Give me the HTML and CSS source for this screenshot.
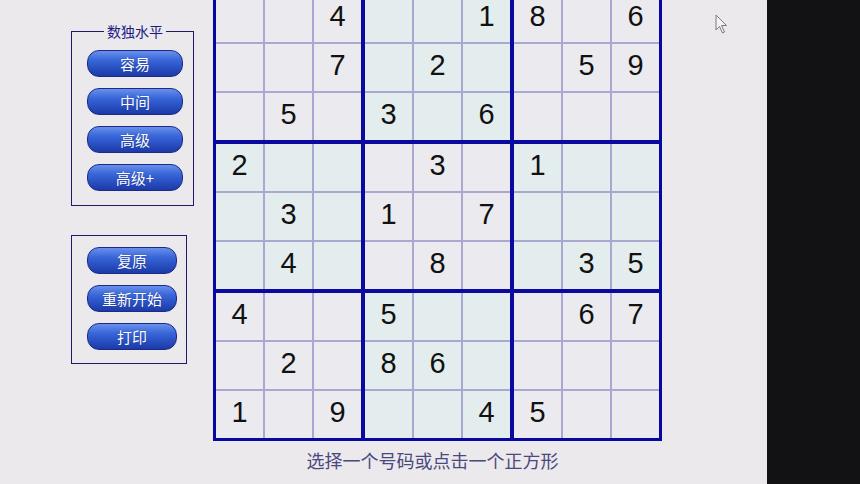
FILE: index.html
```html
<!DOCTYPE html>
<html lang="zh">
<head>
  <meta charset="UTF-8">
  <title>数独</title>
  <link rel="stylesheet" href="styles.css">
</head>
<body>
  <div class="screen">
    <div class="page">
      <div class="layout">
        <div class="side">
          <fieldset class="panel level">
            <legend>数独水平</legend>
            <button type="button" class="btn">容易</button>
            <button type="button" class="btn">中间</button>
            <button type="button" class="btn">高级</button>
            <button type="button" class="btn">高级+</button>
          </fieldset>
          <fieldset class="panel actions">
            <button type="button" class="btn">复原</button>
            <button type="button" class="btn">重新开始</button>
            <button type="button" class="btn">打印</button>
          </fieldset>
        </div>
        <div class="board-wrap">
          <div class="board" id="board"></div>
          <p class="hint">选择一个号码或点击一个正方形</p>
          <div class="numbers">
            <span>1</span><span>2</span><span>3</span><span>4</span><span>5</span><span>6</span><span>7</span><span>8</span><span>9</span>
          </div>
        </div>
      </div>
      <svg class="cursor" width="14" height="20" viewBox="0 0 14 20">
        <path d="M1 1 L1 16 L4.5 12.5 L7.5 19 L9.5 18 L6.5 11.5 L11.5 11.5 Z" fill="#f2f2f2" stroke="#7a7a7a" stroke-width="1"/>
      </svg>
    </div>
    <div class="dark"></div>
  </div>
  <script>
    const puzzle = [
      "004001806",
      "007020059",
      "050306000",
      "200030100",
      "030107000",
      "040080035",
      "400500067",
      "020860000",
      "109004500"
    ];
    const board = document.getElementById('board');
    for (let b = 0; b < 9; b++) {
      const block = document.createElement('div');
      block.className = 'block' + (b % 2 === 1 ? ' alt' : '');
      const br = Math.floor(b / 3) * 3;
      const bc = (b % 3) * 3;
      for (let i = 0; i < 9; i++) {
        const r = br + Math.floor(i / 3);
        const c = bc + (i % 3);
        const cell = document.createElement('div');
        cell.className = 'cell';
        const v = puzzle[r][c];
        if (v !== '0') cell.textContent = v;
        block.appendChild(cell);
      }
      board.appendChild(block);
    }
  </script>
</body>
</html>
```

FILE: styles.css
```css
body {
  margin: 0;
  background: #121113;
  font-family: "Liberation Sans", Arial, sans-serif;
}
.screen {
  display: flex;
  width: 860px;
  height: 484px;
  overflow: hidden;
}
.page {
  position: relative;
  width: 767px;
  height: 484px;
  background: #ebe9eb;
  overflow: hidden;
}
.dark {
  flex: 1;
  background: #121113;
}
.layout {
  display: flex;
  margin-top: -8px;
  padding-left: 71px;
}
.side {
  width: 142px;
  display: flex;
  flex-direction: column;
  align-items: flex-start;
}
.panel {
  box-sizing: border-box;
  margin: 0;
  border: 1px solid #1e1a66;
  display: flex;
  flex-direction: column;
  gap: 11px;
  font-family: "Noto Sans CJK SC", sans-serif;
}
.panel legend {
  margin: 0 auto;
  padding: 0 3px;
  font-size: 14px;
  line-height: 16px;
  color: #1a1a86;
}
.level {
  margin-top: 31px;
  width: 123px;
  padding: 11px 10px 14px 15px;
}
.level .btn {
  width: 96px;
}
.actions {
  margin-top: 29px;
  width: 115px;
  padding: 11px 9px 13px 15px;
}
.actions .btn {
  width: 90px;
}
.btn {
  height: 27px;
  padding: 0;
  border: 1px solid #1b2a86;
  border-radius: 12px;
  background: linear-gradient(to bottom, #6a90ec 0%, #3a68d8 35%, #2a52c4 65%, #1c3aa6 100%);
  color: #fff;
  font-family: "Noto Sans CJK SC", sans-serif;
  font-size: 15px;
  line-height: 25px;
  text-shadow: 0 0 1px #1a2a80;
  cursor: pointer;
}
.board-wrap {
  display: flex;
  flex-direction: column;
  align-items: center;
}
.board {
  display: grid;
  grid-template-columns: repeat(3, auto);
  gap: 4px;
  background: #0a0aa0;
  border: 3px solid #0808a0;
}
.block {
  display: grid;
  grid-template-columns: repeat(3, 47px);
  grid-auto-rows: 47px;
  gap: 2px;
  background: #aaa7d0;
}
.cell {
  background: #ebeaee;
  font-size: 29px;
  line-height: 42px;
  text-align: center;
  color: #111;
}
.block.alt .cell {
  background: #e3eded;
}
.hint {
  margin: 9px 0 0 -10px;
  font-family: "Noto Sans CJK SC", sans-serif;
  font-size: 18px;
  line-height: 20px;
  color: #4a4880;
}
.numbers {
  display: flex;
  gap: 30px;
  margin-top: 11px;
  font-size: 20px;
  font-weight: bold;
  color: #2626a0;
}
.cursor {
  position: absolute;
  left: 715px;
  top: 14px;
}
```
